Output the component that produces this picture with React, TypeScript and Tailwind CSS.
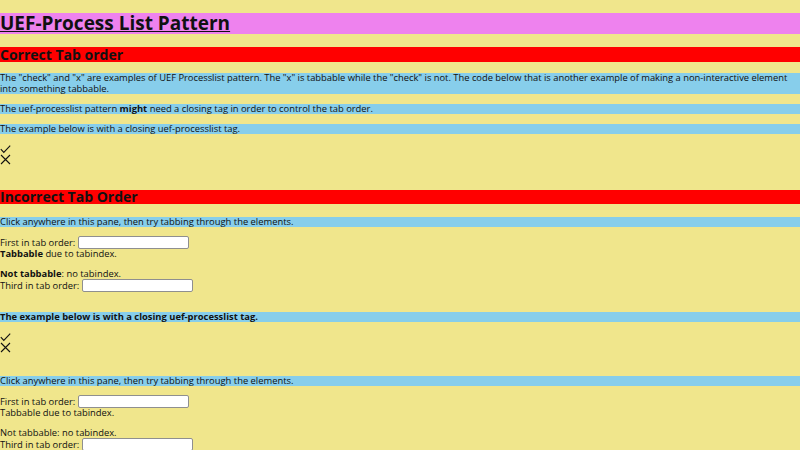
const FONT = "font-['Open_Sans',sans-serif]";

function Check() {
  return (
    <svg width="11" height="10" viewBox="0 0 11 10" className="block">
      <path d="M0.8 5.2 L3.8 8.4 L10.2 1.6" fill="none" stroke="#111" strokeWidth="1.1" />
    </svg>
  );
}

function Cross() {
  return (
    <svg width="11" height="11" viewBox="0 0 11 11" className="block">
      <path d="M1 1 L10 10 M10 1 L1 10" fill="none" stroke="#111" strokeWidth="1.1" />
    </svg>
  );
}

function Field({ label }: { label: string }) {
  return (
    <div className="flex items-center h-[13px] leading-[11px]">
      <span>{label}</span>
      <input
        type="text"
        className="ml-[3px] w-[111px] h-[13px] bg-white border border-[#8f8f8f] rounded-[2px] outline-none"
      />
    </div>
  );
}

function TabPane({ strong }: { strong: boolean }) {
  return (
    <div>
      <p className="bg-[#87ceeb] h-[10px] leading-[10px]">
        Click anywhere in this pane, then try tabbing through the elements.
      </p>
      <div className="mt-[9px]">
        <Field label="First in tab order:" />
        <p className="h-[10px] leading-[10px]">
          {strong ? <b>Tabbable</b> : "Tabbable"} due to tabindex.
        </p>
        <p className="mt-[10px] h-[10px] leading-[10px]">
          {strong ? <b>Not tabbable</b> : "Not tabbable"}: no tabindex.
        </p>
        <Field label="Third in tab order:" />
      </div>
    </div>
  );
}

export default function App() {
  return (
    <div className={`${FONT} w-[800px] h-[450px] overflow-hidden bg-[#f0e68c] text-[#111] text-[9.4px] pt-[13px]`}>
      <h1 className="bg-[#ee82ee] h-[21px] leading-[21px] text-[19px] font-bold underline">
        UEF-Process List Pattern
      </h1>
      <h2 className="mt-[13px] bg-[#ff0000] h-[15px] leading-[15px] text-[14px] font-bold">
        Correct Tab order
      </h2>
      <p className="mt-[11px] bg-[#87ceeb] leading-[10.5px] text-[9.35px]">
        The "check" and "x" are examples of UEF Processlist pattern. The "x" is tabbable while the "check" is not. The code below that is another example of making a non-interactive element
        <br />
        into something tabbable.
      </p>
      <p className="mt-[10px] bg-[#87ceeb] h-[10px] leading-[10px]">
        The uef-processlist pattern <b>might</b> need a closing tag in order to control the tab order.
      </p>
      <p className="mt-[10px] bg-[#87ceeb] h-[10px] leading-[10px]">
        The example below is with a closing uef-processlist tag.
      </p>
      <div className="mt-[10px] flex flex-col">
        <Check />
        <Cross />
      </div>
      <h2 className="mt-[25px] bg-[#ff0000] h-[14px] leading-[14px] text-[14px] font-bold">
        Incorrect Tab Order
      </h2>
      <div className="mt-[13px]">
        <TabPane strong />
      </div>
      <p className="mt-[20px] bg-[#87ceeb] h-[10px] leading-[10px] font-bold">
        The example below is with a closing uef-processlist tag.
      </p>
      <div className="mt-[10px] flex flex-col">
        <Check />
        <Cross />
      </div>
      <div className="mt-[23px]">
        <TabPane strong={false} />
      </div>
    </div>
  );
}
